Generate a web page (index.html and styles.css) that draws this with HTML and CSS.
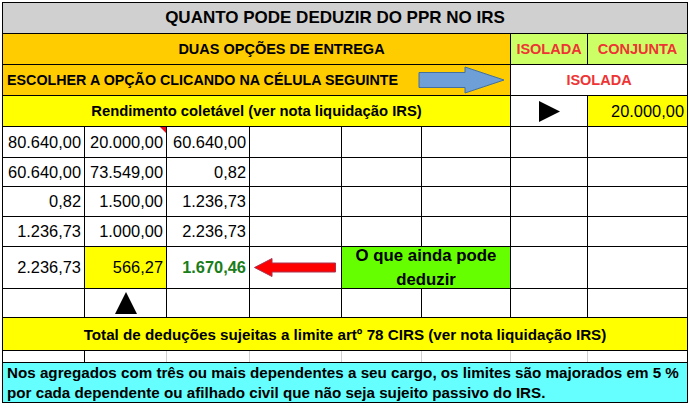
FILE: index.html
```html
<!DOCTYPE html>
<html lang="pt">
<head>
<meta charset="utf-8">
<title>Quanto pode deduzir do PPR no IRS</title>
<link rel="stylesheet" href="styles.css">
</head>
<body>
<div class="sheet">
  <div class="c span8 title">QUANTO PODE DEDUZIR DO PPR NO IRS</div>

  <div class="c span6 orange b head2">DUAS OPÇÕES DE ENTREGA</div>
  <div class="c lime b red center">ISOLADA</div>
  <div class="c lime b red center">CONJUNTA</div>

  <div class="c span6 orange b choose">ESCOLHER A OPÇÃO CLICANDO NA CÉLULA SEGUINTE
    <svg class="blue-arrow" width="88" height="28" viewBox="0 0 88 28"><polygon points="1,6.5 47,6.5 47,1 86,14 47,27 47,21.5 1,21.5" fill="#6e9fd6" stroke="#41719c" stroke-width="1"/></svg>
  </div>
  <div class="c span2 b red center">ISOLADA</div>

  <div class="c span6 yellow b center rend">Rendimento coletável (ver nota liquidação IRS)</div>
  <div class="c center"><svg width="21" height="21" viewBox="0 0 21 21"><polygon points="0,0 21,10.5 0,21" fill="#000"/></svg></div>
  <div class="c yellow num">20.000,00</div>

  <div class="c num">80.640,00</div>
  <div class="c num note">20.000,00</div>
  <div class="c num">60.640,00</div>
  <div class="c"></div><div class="c"></div><div class="c"></div><div class="c"></div><div class="c"></div>

  <div class="c num">60.640,00</div>
  <div class="c num">73.549,00</div>
  <div class="c num">0,82</div>
  <div class="c"></div><div class="c"></div><div class="c"></div><div class="c"></div><div class="c"></div>

  <div class="c num">0,82</div>
  <div class="c num">1.500,00</div>
  <div class="c num">1.236,73</div>
  <div class="c"></div><div class="c"></div><div class="c"></div><div class="c"></div><div class="c"></div>

  <div class="c num">1.236,73</div>
  <div class="c num">1.000,00</div>
  <div class="c num">2.236,73</div>
  <div class="c"></div><div class="c"></div><div class="c"></div><div class="c"></div><div class="c"></div>

  <div class="c num">2.236,73</div>
  <div class="c num yellow">566,27</div>
  <div class="c num green-num">1.670,46</div>
  <div class="c arrow-cell">
    <svg class="red-arrow" width="83" height="20" viewBox="0 0 83 20"><polygon points="0.5,9.5 18,0.5 18,5 81.5,5 81.5,14 18,14 18,18.5" fill="#ff0000" stroke="#a8344f" stroke-width="1"/></svg>
  </div>
  <div class="c span2 bright b wrap">O que ainda pode deduzir</div>
  <div class="c"></div><div class="c"></div>

  <div class="c"></div>
  <div class="c center"><svg width="22" height="22" viewBox="0 0 22 22"><polygon points="11,0 22,22 0,22" fill="#000"/></svg></div>
  <div class="c"></div><div class="c"></div><div class="c"></div><div class="c"></div><div class="c"></div><div class="c"></div>

  <div class="c span8 yellow b center total">Total de deduções sujeitas a limite artº 78 CIRS (ver nota liquidação IRS)</div>

  <div class="c span8 thin">
    <div class="sub first"></div><div class="sub"></div><div class="sub"></div><div class="sub"></div><div class="sub"></div><div class="sub"></div><div class="sub"></div><div class="sub"></div>
  </div>

  <div class="c span8 cyan b footnote">Nos agregados com três ou mais dependentes a seu cargo, os limites são majorados em 5 % por cada dependente ou afilhado civil que não seja sujeito passivo do IRS.</div>
</div>
</body>
</html>
```

FILE: styles.css
```css
html, body {
  margin: 0;
  padding: 0;
  background: #fff;
}

body {
  padding: 2px 0 0 2px;
  font-family: "Liberation Sans", Arial, sans-serif;
  color: #000;
}

.sheet {
  display: grid;
  grid-template-columns: 81px 81px 82px 91px 79px 88px 76px 99px;
  grid-template-rows: 30px 30px 30px 30px 30px 28px 29px 29px 41px 28px 32px 11px 39px;
  gap: 1px;
  padding: 1px;
  background: #000;
  width: max-content;
}

.c {
  background: #fff;
  display: flex;
  align-items: center;
  overflow: hidden;
  white-space: nowrap;
  font-size: 16.4px;
  position: relative;
}

.span2 { grid-column: span 2; }
.span6 { grid-column: span 6; }
.span8 { grid-column: span 8; }

.b {
  font-weight: 700;
  font-size: 14.5px;
}

.center { justify-content: center; }

.title {
  background: #d0d0d0;
  font-weight: 700;
  font-size: 17px;
  justify-content: center;
  padding-right: 20px;
}

.orange { background: #ffcc00; }
.yellow { background: #ffff00; }
.lime { background: #ccff66; }
.bright { background: #66ff00; }
.cyan { background: #66ffff; }

.red { color: #ee3434; }

.head2 {
  justify-content: center;
  padding-left: 50px;
}

.choose {
  padding-left: 4px;
  font-size: 14.3px;
}

.rend {
  font-size: 14.8px;
}

.total {
  font-size: 15.2px;
}

.blue-arrow {
  position: absolute;
  left: 415px;
  top: 1px;
}

.num {
  justify-content: flex-end;
  padding-right: 3px;
}

.note::after {
  content: "";
  position: absolute;
  top: 0;
  right: 0;
  border-top: 6px solid #e8101c;
  border-left: 6px solid transparent;
}

.green-num {
  color: #1a7d1a;
  font-weight: 700;
}

.red-arrow {
  position: absolute;
  left: 4px;
  top: 11px;
}

.wrap {
  white-space: normal;
  text-align: center;
  justify-content: center;
  line-height: 24px;
  font-size: 16.8px;
  padding: 0 6px;
}

.thin {
  display: grid;
  align-items: stretch;
  grid-template-columns: 81px 81px 82px 91px 79px 88px 76px 99px;
  gap: 1px;
  background: #cfcfcf;
}

.sub {
  background: #fff;
}

.sub.first {
  box-shadow: 1px 0 0 #000;
}

.footnote {
  white-space: normal;
  line-height: 20px;
  font-size: 15.2px;
  padding-left: 4px;
  padding-right: 4px;
}
```
